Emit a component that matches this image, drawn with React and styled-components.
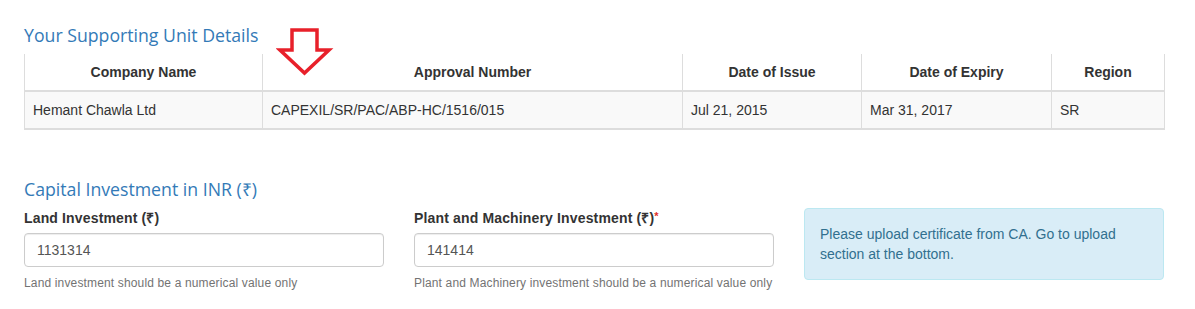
import React from "react";
import styled, { createGlobalStyle } from "styled-components";

const GlobalStyle = createGlobalStyle`
  body {
    margin: 0;
    background: #fff;
    font-family: "Liberation Sans", Arial, sans-serif;
    font-size: 14px;
    line-height: 1.42857;
    color: #333;
  }
  * { box-sizing: border-box; }
`;

const units = [
  { company: "Hemant Chawla Ltd", approval: "CAPEXIL/SR/PAC/ABP-HC/1516/015", issue: "Jul 21, 2015", expiry: "Mar 31, 2017", region: "SR" },
];

const columns = [
  { title: "Company Name", width: 238 },
  { title: "Approval Number", width: 420 },
  { title: "Date of Issue", width: 179 },
  { title: "Date of Expiry", width: 190 },
  { title: "Region", width: 113 },
];

const App = () => {
  return (
    <Page>
      <GlobalStyle />
      <Section>
        <Title>Your Supporting Unit Details</Title>
        <TableWrap>
          <Arrow width="60" height="52" viewBox="0 0 60 52">
            <path d="M16 2 H41 V22 H53 L28.5 45 L4 22 H16 Z" fill="none" stroke="#e8202a" strokeWidth="3.5" strokeLinejoin="miter" />
          </Arrow>
          <Table>
            <colgroup>
              {columns.map((c) => (
                <col key={c.title} style={{ width: c.width }} />
              ))}
            </colgroup>
            <thead>
              <tr>
                {columns.map((c) => (
                  <Th key={c.title}>{c.title}</Th>
                ))}
              </tr>
            </thead>
            <tbody>
              {units.map((u) => (
                <tr key={u.approval}>
                  <Td>{u.company}</Td>
                  <Td>{u.approval}</Td>
                  <Td>{u.issue}</Td>
                  <Td>{u.expiry}</Td>
                  <Td>{u.region}</Td>
                </tr>
              ))}
            </tbody>
          </Table>
        </TableWrap>
      </Section>

      <Section $top={24}>
        <Title>Capital Investment in INR (₹)</Title>
        <FormRow>
          <Field>
            <Label>Land Investment (₹)</Label>
            <Input defaultValue="1131314" />
            <Help>Land investment should be a numerical value only</Help>
          </Field>
          <Field>
            <Label>
              Plant and Machinery Investment (₹)<Required>*</Required>
            </Label>
            <Input defaultValue="141414" />
            <Help>Plant and Machinery investment should be a numerical value only</Help>
          </Field>
          <Alert>Please upload certificate from CA. Go to upload section at the bottom.</Alert>
        </FormRow>
      </Section>
    </Page>
  );
};

export default App;

const Page = styled.div`
  padding: 0 31px 0 24px;
  width: 1195px;
`;

const Section = styled.section`
  margin-top: ${(p) => p.$top || 0}px;
`;

const Title = styled.h3`
  margin: 0;
  padding-top: 25px;
  margin-bottom: 9px;
  font-family: "Open Sans", "Segoe UI", sans-serif;
  font-weight: 400;
  font-size: 17.7px;
  line-height: 20px;
  color: #337ab7;
`;

const TableWrap = styled.div`
  position: relative;
`;

const Arrow = styled.svg`
  position: absolute;
  left: 252px;
  top: -26px;
`;

const Table = styled.table`
  width: 1140px;
  table-layout: fixed;
  border-collapse: collapse;
  border-spacing: 0;
  border-left: 1px solid #ddd;
  border-right: 1px solid #ddd;
`;

const Th = styled.th`
  padding: 8px;
  height: 37px;
  font-weight: bold;
  text-align: center;
  line-height: 20px;
  color: #333;
  border-left: 1px solid #ddd;
  border-right: 1px solid #ddd;
  border-bottom: 2px solid #ddd;
`;

const Td = styled.td`
  padding: 8px;
  line-height: 20px;
  background: #f9f9f9;
  border: 1px solid #ddd;
  border-top: 0;
  border-bottom: 2px solid #ddd;
`;

const FormRow = styled.div`
  display: grid;
  grid-template-columns: 360px 360px 360px;
  column-gap: 30px;
  align-items: start;
`;

const Field = styled.div`
  display: flex;
  flex-direction: column;
`;

const Label = styled.label`
  margin-bottom: 5px;
  font-weight: bold;
  line-height: 20px;
  letter-spacing: 0.15px;
  color: #333;
`;

const Required = styled.span`
  color: #e0302a;
  font-size: 11px;
  vertical-align: top;
  position: relative;
  top: -2px;
`;

const Input = styled.input`
  height: 34px;
  padding: 6px 12px;
  font-family: "Liberation Sans", Arial, sans-serif;
  font-size: 14px;
  color: #555;
  border: 1px solid #ccc;
  border-radius: 4px;
  box-shadow: inset 0 1px 1px rgba(0, 0, 0, 0.075);
  outline: none;
`;

const Help = styled.span`
  margin-top: 8px;
  font-size: 12px;
  line-height: 17px;
  letter-spacing: 0.15px;
  color: #737373;
`;

const Alert = styled.div`
  padding: 15px;
  line-height: 20px;
  color: #31708f;
  background: #d9edf7;
  border: 1px solid #bce8f1;
  border-radius: 4px;
`;
